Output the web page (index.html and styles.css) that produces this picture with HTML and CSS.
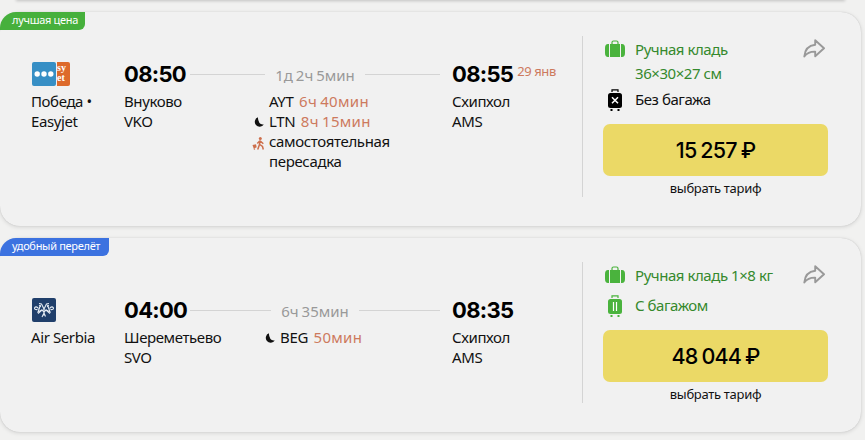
FILE: index.html
```html
<!DOCTYPE html>
<html lang="ru">
<head>
    <meta charset="UTF-8">
    <meta name="viewport" content="width=device-width, initial-scale=1.0">
    <title>Авиабилеты Москва — Амстердам</title>
    <link rel="stylesheet" href="styles.css">
</head>
<body>
    <!-- Shared icons -->
    <svg class="sprite" width="0" height="0">
        <symbol id="handbag" viewBox="0 0 20 17">
            <path d="M7 4V2.6Q7 1 8.5 1h3Q13 1 13 2.6V4" fill="none" stroke="currentColor" stroke-width="1.2"/>
            <path d="M5 4h10v13H5zM4 4v13H3Q0 17 0 13V8Q0 4 3 4zM16 4v13h1q3 0 3-4V8q0-4-3-4z" fill="currentColor"/>
        </symbol>
        <symbol id="moon" viewBox="0 0 10 10">
            <path d="M3.800.3A4.900 4.900 0 1 0 9.800 7.500Q4.500 8.500 3.800.3z" fill="currentColor"/>
        </symbol>
        <symbol id="share" viewBox="0 0 22 19">
            <path d="M12.200 1.300L21 9.300l-8.800 8v-4.700Q5 12.400 1.300 17.500 2.200 7 12.200 5.800z" fill="none" stroke="currentColor" stroke-width="1.9" stroke-linejoin="round"/>
        </symbol>
    </svg>

    <div class="prev-card"></div>

    <div class="card">
        <span class="badge badge-green">лучшая цена</span>
        <div class="body">
            <div class="flight">
                <div class="logos">
                    <svg class="logo" viewBox="0 0 24 24">
                        <rect width="24" height="24" rx="2" fill="#378fc5"/>
                        <circle cx="5.200" cy="12" r="2.700" fill="#fff"/>
                        <circle cx="12" cy="12" r="2.700" fill="#fff"/>
                        <circle cx="18.800" cy="12" r="2.700" fill="#fff"/>
                    </svg>
                    <div class="logo-easy"><div>sy</div><div>et</div></div>
                </div>
                <div class="time">08:50</div>
                <div class="duration"><span>1д 2ч 5мин</span></div>
                <div class="time">08:55<span class="date">29 янв</span></div>

                <div class="name">Победа •<br>Easyjet</div>
                <div class="name">Внуково<br>VKO</div>
                <ul class="stops stops-long">
                    <li>AYT <span class="wait">6ч 40мин</span></li>
                    <li><svg class="moon"><use href="#moon"/></svg>LTN <span class="wait">8ч 15мин</span></li>
                    <li>
                        <svg class="walker" viewBox="0 0 13 13">
                            <circle cx="8.300" cy="1.600" r="1.500" fill="#cd6f4c"/>
                            <path d="M8 3.500L7.500 8M7.700 4L5.300 6.500M8.300 4l3 2.800M7.500 7.500L5.700 12.500M7.800 7.500l2.700 2 .8 3" fill="none" stroke="#cd6f4c" stroke-width="1.500"/>
                            <path d="M.5 8l3.500-.7.7 3-3 1.200z" fill="#cd6f4c"/>
                            <circle cx="2.400" cy="12" r=".8" fill="#cd6f4c"/>
                        </svg>самостоятельная<br>пересадка
                    </li>
                </ul>
                <div class="name">Схипхол<br>AMS</div>
            </div>

            <div class="offer">
                <svg class="share"><use href="#share"/></svg>
                <div class="bag bag-green">
                    <svg class="handbag"><use href="#handbag"/></svg>
                    <span>Ручная кладь<br>36×30×27 см</span>
                </div>
                <div class="bag bag-second">
                    <svg class="suitcase" viewBox="0 0 14 22">
                        <path d="M4 3V.8h6V3" fill="none" stroke="#000" stroke-width="1.200"/>
                        <rect y="4" width="14" height="15" rx="2.500" fill="#000"/>
                        <path d="M2.500 20h2v2h-2zM9.500 20h2v2h-2z" fill="#000"/>
                        <path d="M4 8.200l6 6M10 8.200l-6 6" stroke="#fff" stroke-width="1.500"/>
                    </svg>
                    <span>Без багажа</span>
                </div>
                <button class="price">15 257 ₽</button>
                <div class="choose">выбрать тариф</div>
            </div>
        </div>
    </div>

    <div class="card">
        <span class="badge badge-blue">удобный перелёт</span>
        <div class="body">
            <div class="flight">
                <div class="logos">
                    <svg class="logo" viewBox="0 0 24 24">
                        <rect width="24" height="24" rx="2" fill="#203f6b"/>
                        <g fill="none" stroke="#e4ebf3" stroke-width="1.100">
                            <path d="M7 5.500l2.500.5 2.500 5 2.500-5 2.500-.5M7 7.500l2 1M17 7.500l-2 1M8.500 7L6 14l4-2 2 2 2-2 4 2-2.500-7"/>
                            <path d="M6.500 10.500Q4 7.500 2.500 10q0 2 3 1.500M17.500 10.500q2.500-3 4-.5 0 2-3 1.500"/>
                            <path d="M10 12l-4 3.500M14 12l4 3.500M12 11v4.500M12 15l-2 4M12 15l1.500 3.500M10.500 17h2.500"/>
                        </g>
                    </svg>
                </div>
                <div class="time">04:00</div>
                <div class="duration"><span>6ч 35мин</span></div>
                <div class="time">08:35</div>

                <div class="name">Air Serbia</div>
                <div class="name">Шереметьево<br>SVO</div>
                <ul class="stops">
                    <li><svg class="moon"><use href="#moon"/></svg>BEG <span class="wait">50мин</span></li>
                </ul>
                <div class="name">Схипхол<br>AMS</div>
            </div>

            <div class="offer">
                <svg class="share"><use href="#share"/></svg>
                <div class="bag bag-green">
                    <svg class="handbag"><use href="#handbag"/></svg>
                    <span>Ручная кладь 1×8 кг</span>
                </div>
                <div class="bag bag-green bag-second bag-spaced">
                    <svg class="suitcase" viewBox="0 0 14 22">
                        <path d="M4 3V.8h6V3" fill="none" stroke="currentColor" stroke-width="1.200"/>
                        <rect y="4" width="14" height="15" rx="2.500" fill="currentColor"/>
                        <path d="M2.500 20h2v2h-2zM9.500 20h2v2h-2z" fill="currentColor"/>
                        <path d="M5.500 7v9M8.500 7v9" stroke="#fff" stroke-width="1.200"/>
                    </svg>
                    <span>С багажом</span>
                </div>
                <button class="price">48 044 ₽</button>
                <div class="choose">выбрать тариф</div>
            </div>
        </div>
    </div>
</body>
</html>
```

FILE: styles.css
```css
* {
    margin: 0;
    padding: 0;
    box-sizing: border-box;
}

body {
    font-family: "Noto Sans", sans-serif;
    font-size: 15px;
    line-height: 20px;
    color: #111;
    background: #f1f1f0;
    width: 865px;
    height: 440px;
    overflow: hidden;
}

.sprite {
    position: absolute;
}

/* Bottom edge of the card scrolled out above */
.prev-card {
    height: 12px;
    margin: -12px 20px 12px 16px;
    box-shadow: 0 1px 3px rgba(0,0,0,0.2);
}

.card {
    position: relative;
    width: 861px;
    margin-bottom: 12px;
    padding: 24px 33px 29px 31px;
    border-radius: 20px;
    background: #f1f1f1;
    box-shadow: 0 0 1px rgba(0,0,0,0.18), 0 1px 4px rgba(0,0,0,0.13);
}

.badge {
    position: absolute;
    top: 0;
    left: 0;
    height: 18px;
    padding: 0 8px 0 12px;
    border-radius: 16px 0 6px 0;
    font-size: 11px;
    letter-spacing: -0.3px;
    line-height: 16px;
    color: #fff;
    white-space: nowrap;
}

.badge-green {
    width: 85px;
    background: #46b03c;
}

.badge-blue {
    width: 109px;
    background: #3c72e0;
}

.body {
    display: flex;
    align-items: stretch;
}

.flight {
    display: grid;
    grid-template-columns: 93px 66px 262px 130px;
    grid-template-rows: 30px auto;
    align-content: center;
    width: 552px;
    border-right: 1px solid #d4d4d4;
}

.logos {
    display: flex;
    padding-left: 1px;
}

.logo {
    width: 24px;
    height: 24px;
}

.logo-easy {
    width: 14px;
    height: 24px;
    padding-top: 1px;
    border-left: 1px solid #f1f1f1;
    border-radius: 0 2px 2px 0;
    overflow: hidden;
    background: #dd6a2b;
    color: #fff;
    font: bold 10px/10px "Liberation Serif", serif;
}

.time {
    font-family: Inter, sans-serif;
    font-size: 22px;
    font-weight: 650;
    letter-spacing: -0.7px;
    line-height: 25px;
    white-space: nowrap;
    color: #000;
}

.date {
    margin-left: 4px;
    font-family: "Noto Sans", sans-serif;
    font-size: 13px;
    font-weight: 400;
    letter-spacing: -0.4px;
    vertical-align: 6px;
    line-height: 1;
    color: #cd7a5e;
}

.duration {
    display: flex;
    align-items: center;
    gap: 10px;
    width: 250px;
    height: 25px;
    word-spacing: -1px;
    color: #999;
}

.duration::before,
.duration::after {
    content: "";
    flex: 1;
    height: 1px;
    background: #d4d4d4;
}

.name {
    margin-top: -1px;
    letter-spacing: -0.4px;
    white-space: nowrap;
}

.stops {
    list-style: none;
    margin-top: -1px;
    margin-left: 90px;
    letter-spacing: -0.35px;
    white-space: nowrap;
}

.stops-long {
    margin-left: 79px;
}

.stops li {
    position: relative;
}

.wait {
    margin-left: 2px;
    letter-spacing: 0.3px;
    word-spacing: -1px;
    color: #cd7a5e;
}

.moon {
    position: absolute;
    left: -15px;
    top: 6px;
    width: 10px;
    height: 10px;
}

.walker {
    position: absolute;
    left: -17px;
    top: 6px;
    width: 13px;
    height: 13px;
}

.offer {
    position: relative;
    width: 245px;
    padding: 1px 0 0 20px;
    margin-bottom: -1px;
}

.share {
    position: absolute;
    top: 3px;
    right: 3px;
    width: 22px;
    height: 19px;
    color: #999;
}

.bag {
    display: flex;
    align-items: flex-start;
    letter-spacing: -0.45px;
    line-height: 24px;
    white-space: nowrap;
}

.bag-green {
    color: #35892d;
}

.bag-second {
    margin-top: 2px;
}

.bag-spaced {
    margin-top: 6px;
}

.bag-green svg {
    color: #4ab33d;
}

.handbag {
    width: 20px;
    height: 17px;
    margin: 3px 10px 0 2px;
}

.suitcase {
    width: 14px;
    height: 22px;
    margin: 2px 13px 0 5px;
}

.price {
    display: block;
    width: 225px;
    height: 52px;
    margin-top: 13px;
    border: none;
    border-radius: 7px;
    background: #ebd966;
    color: #000;
    font: 450 21.5px/50px Inter, sans-serif;
    letter-spacing: -0.8px;
    word-spacing: -1px;
    cursor: pointer;
}

.choose {
    width: 225px;
    margin-top: 2px;
    font-size: 13px;
    letter-spacing: -0.3px;
    text-align: center;
}
```
